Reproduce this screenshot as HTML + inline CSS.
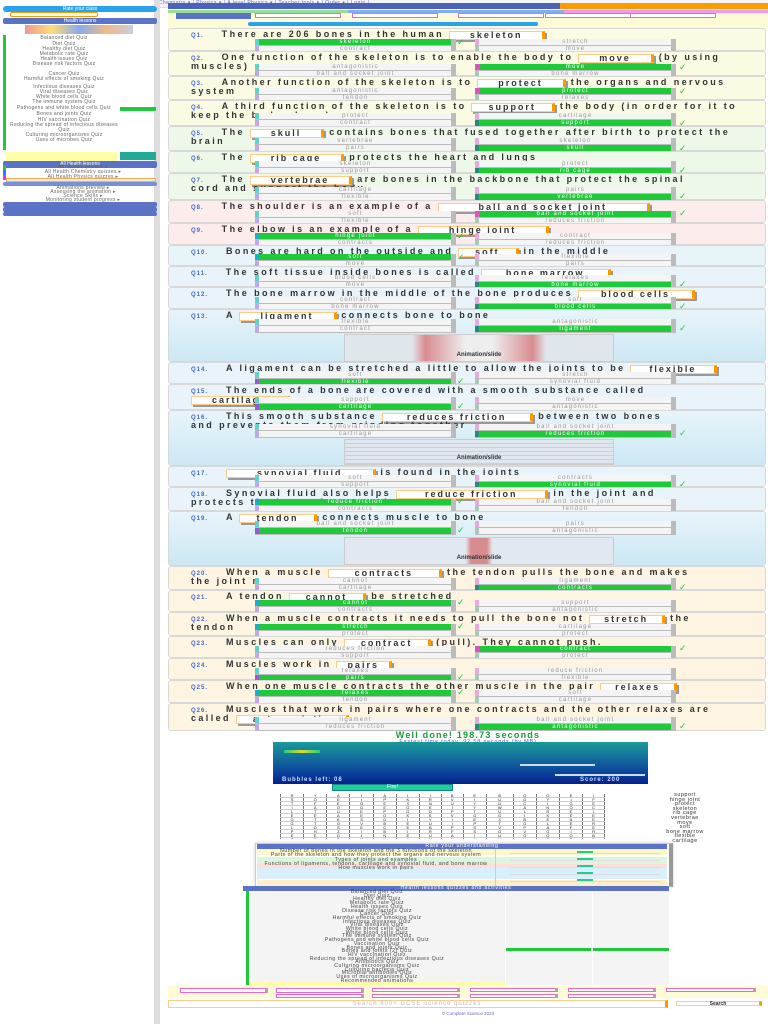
<!DOCTYPE html>
<html><head><meta charset="utf-8"><style>
*{box-sizing:border-box;margin:0;padding:0}
body{width:768px;height:1024px;position:relative;overflow:hidden;background:#fff;font-family:"Liberation Sans",sans-serif;color:#333}
.a{position:absolute}
#side{left:0;top:0;width:160px;height:1024px;background:#fff;border-right:6px solid #ddd}
.sb{position:absolute;left:3px;width:154px;height:6px;background:#5b73c4;border-radius:2px;color:#fff;font-size:5px;text-align:center;line-height:6px}
.sl{position:absolute;left:8px;width:112px;font-size:5px;color:#666;text-align:center;letter-spacing:.3px;line-height:5px}
.q{position:absolute;left:168px;width:598px;border:1px solid #d8d8d8;border-radius:3px}
.qt{position:absolute;left:22px;right:2px;top:2px;font-size:9px;font-weight:bold;letter-spacing:2.4px;line-height:7px;color:#333;white-space:nowrap}
.qt i{font-style:normal;color:#4466cc;font-size:6px;margin-right:18px;letter-spacing:1px}
.ab{display:inline-block;background:#fff;border:1px solid #fc8;border-right:3px solid #f90;box-shadow:2px 2px 0 #999;padding:0 20px;text-align:center;font-weight:bold;line-height:7px;height:9px;vertical-align:top;letter-spacing:2px}
.o{position:absolute;width:196px;height:7px;background:#f4f4f4;border-bottom:1px solid #bbb;font-size:6px;line-height:6px;color:#999;text-align:center;letter-spacing:1.2px;padding-left:5px}
.o:before{content:"";position:absolute;left:0;top:0;width:4px;height:6px;background:var(--c)}
.o:after{content:"";position:absolute;right:-5px;top:0;width:5px;height:7px;background:#bbb}
.L{left:86px}.R{left:306px}
.g{background:#1ec93a;color:#fff}
.tk{position:absolute;font-size:9px;color:#1ec93a;line-height:7px}
.img{position:absolute;left:175px;width:270px;background:#e8eef2;border:1px solid #ccc}
table.ws{border-collapse:collapse;width:325px;height:45px;font-size:4px;line-height:3px;text-align:center}
table.ws td{border:1px solid #777;border-width:0 1px 1px 1px;border-bottom-color:#ccc;padding:0;height:3.4px;color:#222;background:#fff}
</style></head><body>

<div class="a" style="left:0;top:0;width:768px;height:8px;background:#f5f5f5;border-bottom:1px solid #ddd"></div>
<div class="a" style="left:0;top:0;width:48px;height:6px;background:linear-gradient(90deg,#c97,#eb8)"></div>
<div class="a" style="left:50px;top:0;width:340px;height:6px;font-size:5px;color:#56c;letter-spacing:.5px;white-space:nowrap">| Home | Free animations ▾ | Biology ▾ | Chemistry ▾ | Physics ▾ | A level Physics ▾ | Teacher tools ▾ | Order ▾ | Login |</div>

<div id="side" class="a">
<div class="sb" style="top:6px;background:#29a3f0;border-radius:4px">Rate your class</div>
<div class="a" style="left:10px;top:12px;width:88px;height:5px;border:1px solid #f90;border-radius:2px"></div>
<div class="sb" style="top:18px">Health lessons</div>
<div class="a" style="left:25px;top:25px;width:108px;height:9px;background:linear-gradient(90deg,#e99,#fd7,#8ae,#eb8,#ccd)"></div>
<div class="a" style="left:3px;top:35px;width:3px;height:115px;background:#1ec93a"></div>
<div class="sl" style="top:36px">Balanced diet Quiz</div>
<div class="sl" style="top:42px">Diet Quiz</div>
<div class="sl" style="top:47px">Healthy diet Quiz</div>
<div class="sl" style="top:52px">Metabolic rate Quiz</div>
<div class="sl" style="top:57px">Health issues Quiz</div>
<div class="sl" style="top:62px">Disease risk factors Quiz</div>
<div class="sl" style="top:72px">Cancer Quiz</div>
<div class="sl" style="top:77px">Harmful effects of smoking Quiz</div>
<div class="sl" style="top:85px">Infectious diseases Quiz</div>
<div class="sl" style="top:90px">Viral diseases Quiz</div>
<div class="sl" style="top:95px">White blood cells Quiz</div>
<div class="sl" style="top:100px">The immune system Quiz</div>
<div class="sl" style="top:106px">Pathogens and white blood cells Quiz</div>
<div class="a" style="left:120px;top:107px;width:36px;height:4px;background:#1ec93a"></div>
<div class="sl" style="top:112px">Bones and joints Quiz</div>
<div class="sl" style="top:118px">HIV vaccination Quiz</div>
<div class="sl" style="top:123px">Reducing the spread of infectious diseases Quiz</div>
<div class="sl" style="top:133px">Culturing microorganisms Quiz</div>
<div class="sl" style="top:138px">Uses of microbes Quiz</div>
<div class="a" style="left:6px;top:152px;width:112px;height:9px;background:#ffa"></div>
<div class="a" style="left:120px;top:152px;width:36px;height:8px;background:#2a9"></div>
<div class="sb" style="top:161px;height:7px">All Health lessons</div>
<div class="a" style="left:3px;top:165px;width:3px;height:5px;background:#1ec93a"></div>
<div class="a" style="left:3px;top:170px;width:3px;height:5px;background:#37f"></div>
<div class="a" style="left:3px;top:175px;width:3px;height:5px;background:#e3c"></div>
<div class="sl" style="top:165px;width:150px">All Health quizzes ▸</div>
<div class="sl" style="top:170px;width:150px">All Health Chemistry quizzes ▸</div>
<div class="sl" style="top:175px;width:150px">All Health Physics quizzes ▸</div>
<div class="a" style="left:6px;top:178px;width:150px;height:4px;border:1px solid #fa4;background:#eee"></div>
<div class="sb" style="top:182px;height:4px;background:#7b8fd4"></div>
<div class="sl" style="top:186px;width:150px">Animations preview ▸</div>
<div class="sl" style="top:190px;width:150px">Assessing the animation ▸</div>
<div class="sl" style="top:194px;width:150px">Science Skills ▸</div>
<div class="sl" style="top:198px;width:150px">Monitoring student progress ▸</div>
<div class="sb" style="top:202px;height:5px"></div>
<div class="sb" style="top:207px;height:5px"></div>
<div class="sb" style="top:212px;height:4px"></div>
</div>

<div class="a" style="left:168px;top:3px;width:600px;height:6px;background:#4a62b8"></div>
<div class="a" style="left:560px;top:3px;width:208px;height:6px;background:#f90"></div>
<div class="a" style="left:168px;top:9px;width:600px;height:20px;background:#fdfbd6"></div>
<div class="a" style="left:168px;top:10px;width:600px;height:3px;background:linear-gradient(90deg,#9d9 0 30%,#8ae 30% 66%,#e9e 66%)"></div>
<div class="a" style="left:176px;top:13px;width:75px;height:6px;background:#5b73c4"></div>
<div class="a" style="left:255px;top:13px;width:86px;height:5px;background:#fff;border:1px solid #e6c"></div>
<div class="a" style="left:352px;top:13px;width:86px;height:5px;background:#fff;border:1px solid #e6c"></div>
<div class="a" style="left:458px;top:13px;width:86px;height:5px;background:#fff;border:1px solid #e6c"></div>
<div class="a" style="left:545px;top:13px;width:86px;height:5px;background:#fff;border:1px solid #e6c"></div>
<div class="a" style="left:630px;top:13px;width:86px;height:5px;background:#fff;border:1px solid #e6c"></div>
<div class="a" style="left:248px;top:22px;width:290px;height:4px;background:#29a3f0;border-radius:3px"></div>

<div class="q" style="top:28px;height:23px;background:#fbfbe4"><div class="qt"><i>Q1.</i>There are 206 bones in the human <span class="ab">skeleton</span></div>
<div class="o L g" style="top:10px;--c:#5fd3c8">skeleton</div><span class="tk" style="left:288px;top:10px">✓</span><div class="o L" style="top:17px;--c:#c0a8e8">contract</div><div class="o R" style="top:10px;--c:#eaa8e0">stretch</div><div class="o R" style="top:17px;--c:#a8c8b8">move</div></div>

<div class="q" style="top:51px;height:25px;background:#fbfbe4"><div class="qt"><i>Q2.</i>One function of the skeleton is to enable the body to <span class="ab">move</span> (by using<br>muscles)</div>
<div class="o L" style="top:12px;--c:#5fd3c8">antagonistic</div><div class="o L" style="top:19px;--c:#c0a8e8">ball and socket joint</div><div class="o R g" style="top:12px;--c:#e84cc8">move</div><span class="tk" style="left:510px;top:12px">✓</span><div class="o R" style="top:19px;--c:#a8c8b8">bone marrow</div></div>

<div class="q" style="top:76px;height:24px;background:#fbfbe4"><div class="qt"><i>Q3.</i>Another function of the skeleton is to <span class="ab">protect</span> the organs and nervous<br>system</div>
<div class="o L" style="top:11px;--c:#5fd3c8">antagonistic</div><div class="o L" style="top:18px;--c:#c0a8e8">tendon</div><div class="o R g" style="top:11px;--c:#e84cc8">protect</div><span class="tk" style="left:510px;top:11px">✓</span><div class="o R" style="top:18px;--c:#a8c8b8">relaxes</div></div>

<div class="q" style="top:100px;height:26px;background:#fbfbe4"><div class="qt"><i>Q4.</i>A third function of the skeleton is to <span class="ab" style="padding:0 16px">support</span> the body (in order for it to<br>keep the body shape)</div>
<div class="o L" style="top:12px;--c:#5fd3c8">protect</div><div class="o L" style="top:19px;--c:#c0a8e8">contract</div><div class="o R" style="top:12px;--c:#eaa8e0">cartilage</div><div class="o R g" style="top:19px;--c:#2a8a7a">support</div><span class="tk" style="left:510px;top:19px">✓</span></div>

<div class="q" style="top:126px;height:25px;background:#eef8e8"><div class="qt"><i>Q5.</i>The <span class="ab">skull</span> contains bones that fused together after birth to protect the<br>brain</div>
<div class="o L" style="top:11px;--c:#5fd3c8">vertebrae</div><div class="o L" style="top:18px;--c:#c0a8e8">pairs</div><div class="o R" style="top:11px;--c:#eaa8e0">skeleton</div><div class="o R g" style="top:18px;--c:#2a8a7a">skull</div><span class="tk" style="left:510px;top:18px">✓</span></div>

<div class="q" style="top:151px;height:22px;background:#eef8e8"><div class="qt"><i>Q6.</i>The <span class="ab">rib cage</span> protects the heart and lungs</div>
<div class="o L" style="top:9px;--c:#5fd3c8">skeleton</div><div class="o L" style="top:16px;--c:#c0a8e8">support</div><div class="o R" style="top:9px;--c:#eaa8e0">protect</div><div class="o R g" style="top:16px;--c:#2a8a7a">rib cage</div><span class="tk" style="left:510px;top:15px">✓</span></div>

<div class="q" style="top:173px;height:27px;background:#eef8e8"><div class="qt"><i>Q7.</i>The <span class="ab">vertebrae</span> are bones in the backbone that protect the spinal<br>cord and support the body</div>
<div class="o L" style="top:13px;--c:#5fd3c8">cartilage</div><div class="o L" style="top:20px;--c:#c0a8e8">flexible</div><div class="o R" style="top:13px;--c:#eaa8e0">pairs</div><div class="o R g" style="top:20px;--c:#2a8a7a">vertebrae</div><span class="tk" style="left:510px;top:19px">✓</span></div>

<div class="q" style="top:200px;height:23px;background:#fcecec"><div class="qt"><i>Q8.</i>The shoulder is an example of a <span class="ab" style="padding:0 40px">ball and socket joint</span></div>
<div class="o L" style="top:10px;--c:#5fd3c8">soft</div><div class="o L" style="top:17px;--c:#c0a8e8">flexible</div><div class="o R g" style="top:10px;--c:#e84cc8">ball and socket joint</div><span class="tk" style="left:510px;top:9px">✓</span><div class="o R" style="top:17px;--c:#a8c8b8">reduces friction</div></div>

<div class="q" style="top:223px;height:22px;background:#fcecec"><div class="qt"><i>Q9.</i>The elbow is an example of a <span class="ab" style="padding:0 30px">hinge joint</span></div>
<div class="o L g" style="top:9px;--c:#1bb0c0">hinge joint</div><span class="tk" style="left:288px;top:9px">✓</span><div class="o L" style="top:16px;--c:#c0a8e8">contracts</div><div class="o R" style="top:9px;--c:#eaa8e0">contract</div><div class="o R" style="top:16px;--c:#a8c8b8">reduces friction</div></div>

<div class="q" style="top:245px;height:21px;background:#e8f4fa"><div class="qt"><i>Q10.</i>Bones are hard on the outside and <span class="ab" style="padding:0 16px">soft</span> in the middle</div>
<div class="o L g" style="top:8px;--c:#1bb0c0">soft</div><span class="tk" style="left:288px;top:8px">✓</span><div class="o L" style="top:15px;--c:#c0a8e8">move</div><div class="o R" style="top:8px;--c:#eaa8e0">flexible</div><div class="o R" style="top:15px;--c:#a8c8b8">pairs</div></div>

<div class="q" style="top:266px;height:21px;background:#e8f4fa"><div class="qt"><i>Q11.</i>The soft tissue inside bones is called <span class="ab" style="padding:0 24px">bone marrow</span></div>
<div class="o L" style="top:8px;--c:#5fd3c8">blood cells</div><div class="o L" style="top:15px;--c:#c0a8e8">move</div><div class="o R" style="top:8px;--c:#eaa8e0">relaxes</div><div class="o R g" style="top:15px;--c:#2a8a7a">bone marrow</div><span class="tk" style="left:510px;top:14px">✓</span></div>

<div class="q" style="top:287px;height:22px;background:#e8f4fa"><div class="qt"><i>Q12.</i>The bone marrow in the middle of the bone produces <span class="ab" style="padding:0 22px">blood cells</span></div>
<div class="o L" style="top:9px;--c:#5fd3c8">contract</div><div class="o L" style="top:16px;--c:#c0a8e8">bone marrow</div><div class="o R" style="top:9px;--c:#eaa8e0">soft</div><div class="o R g" style="top:16px;--c:#2a8a7a">blood cells</div><span class="tk" style="left:510px;top:15px">✓</span></div>

<div class="q" style="top:309px;height:53px;background:linear-gradient(#e8f4fa,#cce8f4)"><div class="qt"><i>Q13.</i>A <span class="ab" style="padding:0 20px">ligament</span> connects bone to bone</div>
<div class="o L" style="top:9px;--c:#5fd3c8">flexible</div><div class="o L" style="top:16px;--c:#c0a8e8">contract</div><div class="o R" style="top:9px;--c:#eaa8e0">antagonistic</div><div class="o R g" style="top:16px;--c:#2a8a7a">ligament</div><span class="tk" style="left:510px;top:15px">✓</span>
<div class="img" style="top:24px;height:28px;background:linear-gradient(90deg,#dfe6ec 25%,#d98c90 30%,#eee 45%,#eee 55%,#d98c90 70%,#dfe6ec 75%)"><div style="position:absolute;left:0;right:0;bottom:3px;text-align:center;font-size:6px;font-weight:bold;color:#333">Animation/slide</div></div></div>

<div class="q" style="top:362px;height:22px;background:#e8f4fa"><div class="qt"><i>Q14.</i>A ligament can be stretched a little to allow the joints to be <span class="ab" style="padding:0 18px">flexible</span></div>
<div class="o L" style="top:9px;--c:#5fd3c8">soft</div><div class="o L g" style="top:16px;--c:#9a5ad8">flexible</div><span class="tk" style="left:288px;top:15px">✓</span><div class="o R" style="top:9px;--c:#eaa8e0">stretch</div><div class="o R" style="top:16px;--c:#a8c8b8">synovial fluid</div></div>

<div class="q" style="top:384px;height:26px;background:#e8f4fa"><div class="qt"><i>Q15.</i>The ends of a bone are covered with a smooth substance called<br><span class="ab" style="padding:0 20px">cartilage</span></div>
<div class="o L" style="top:12px;--c:#5fd3c8">support</div><div class="o L g" style="top:19px;--c:#9a5ad8">cartilage</div><span class="tk" style="left:288px;top:18px">✓</span><div class="o R" style="top:12px;--c:#eaa8e0">move</div><div class="o R" style="top:19px;--c:#a8c8b8">antagonistic</div></div>

<div class="q" style="top:410px;height:56px;background:linear-gradient(#e8f4fa,#cce8f4)"><div class="qt"><i>Q16.</i>This smooth substance <span class="ab" style="padding:0 24px">reduces friction</span> between two bones<br>and prevents them from grinding together</div>
<div class="o L" style="top:13px;--c:#5fd3c8">synovial fluid</div><div class="o L" style="top:20px;--c:#c0a8e8">cartilage</div><div class="o R" style="top:13px;--c:#eaa8e0">ball and socket joint</div><div class="o R g" style="top:20px;--c:#2a8a7a">reduces friction</div><span class="tk" style="left:510px;top:19px">✓</span>
<div class="img" style="top:28px;height:26px;background:repeating-linear-gradient(#dfe6ee 0 3px,#c8d0e8 3px 4px)"><div style="position:absolute;left:0;right:0;bottom:3px;text-align:center;font-size:6px;font-weight:bold;color:#333">Animation/slide</div></div></div>

<div class="q" style="top:466px;height:21px;background:#e8f4fa"><div class="qt"><i>Q17.</i><span class="ab" style="padding:0 30px">synovial fluid</span> is found in the joints</div>
<div class="o L" style="top:8px;--c:#5fd3c8">soft</div><div class="o L" style="top:15px;--c:#c0a8e8">support</div><div class="o R" style="top:8px;--c:#eaa8e0">contracts</div><div class="o R g" style="top:15px;--c:#2a8a7a">synovial fluid</div><span class="tk" style="left:510px;top:14px">✓</span></div>

<div class="q" style="top:487px;height:24px;background:#e8f4fa"><div class="qt"><i>Q18.</i>Synovial fluid also helps <span class="ab" style="padding:0 28px">reduce friction</span> in the joint and<br>protects the bones from wearing away</div>
<div class="o L g" style="top:11px;--c:#1bb0c0">reduce friction</div><span class="tk" style="left:288px;top:10px">✓</span><div class="o L" style="top:18px;--c:#c0a8e8">contracts</div><div class="o R" style="top:11px;--c:#eaa8e0">ball and socket joint</div><div class="o R" style="top:18px;--c:#a8c8b8">tendon</div></div>

<div class="q" style="top:511px;height:55px;background:linear-gradient(#e8f4fa,#cce8f4)"><div class="qt"><i>Q19.</i>A <span class="ab" style="padding:0 16px">tendon</span> connects muscle to bone</div>
<div class="o L" style="top:9px;--c:#5fd3c8">ball and socket joint</div><div class="o L g" style="top:16px;--c:#9a5ad8">tendon</div><span class="tk" style="left:288px;top:15px">✓</span><div class="o R" style="top:9px;--c:#eaa8e0">pairs</div><div class="o R" style="top:16px;--c:#a8c8b8">antagonistic</div>
<div class="img" style="top:25px;height:28px;background:linear-gradient(90deg,#e2e8f0 45%,#d98c90 47%,#d98c90 53%,#e2e8f0 55%)"><div style="position:absolute;left:0;right:0;bottom:3px;text-align:center;font-size:6px;font-weight:bold;color:#333">Animation/slide</div></div></div>

<div class="q" style="top:566px;height:24px;background:#fdf4e2"><div class="qt"><i>Q20.</i>When a muscle <span class="ab" style="padding:0 26px">contracts</span> the tendon pulls the bone and makes<br>the joint move</div>
<div class="o L" style="top:11px;--c:#5fd3c8">cannot</div><div class="o L" style="top:18px;--c:#c0a8e8">cartilage</div><div class="o R" style="top:11px;--c:#eaa8e0">ligament</div><div class="o R g" style="top:18px;--c:#2a8a7a">contracts</div><span class="tk" style="left:510px;top:17px">✓</span></div>

<div class="q" style="top:590px;height:22px;background:#fdf4e2"><div class="qt"><i>Q21.</i>A tendon <span class="ab" style="padding:0 16px">cannot</span> be stretched</div>
<div class="o L g" style="top:9px;--c:#1bb0c0">cannot</div><span class="tk" style="left:288px;top:8px">✓</span><div class="o L" style="top:16px;--c:#c0a8e8">contracts</div><div class="o R" style="top:9px;--c:#eaa8e0">support</div><div class="o R" style="top:16px;--c:#a8c8b8">antagonistic</div></div>

<div class="q" style="top:612px;height:24px;background:#fdf4e2"><div class="qt"><i>Q22.</i>When a muscle contracts it needs to pull the bone not <span class="ab" style="padding:0 14px">stretch</span> the<br>tendon</div>
<div class="o L g" style="top:11px;--c:#1bb0c0">stretch</div><span class="tk" style="left:288px;top:10px">✓</span><div class="o L" style="top:18px;--c:#c0a8e8">protect</div><div class="o R" style="top:11px;--c:#eaa8e0">cartilage</div><div class="o R" style="top:18px;--c:#a8c8b8">protect</div></div>

<div class="q" style="top:636px;height:22px;background:#fdf4e2"><div class="qt"><i>Q23.</i>Muscles can only <span class="ab" style="padding:0 16px">contract</span> (pull). They cannot push.</div>
<div class="o L" style="top:9px;--c:#5fd3c8">reduces friction</div><div class="o L" style="top:16px;--c:#c0a8e8">support</div><div class="o R g" style="top:9px;--c:#e84cc8">contract</div><span class="tk" style="left:510px;top:8px">✓</span><div class="o R" style="top:16px;--c:#a8c8b8">protect</div></div>

<div class="q" style="top:658px;height:22px;background:#fdf4e2"><div class="qt"><i>Q24.</i>Muscles work in <span class="ab" style="padding:0 10px">pairs</span></div>
<div class="o L" style="top:9px;--c:#5fd3c8">relaxes</div><div class="o L g" style="top:16px;--c:#9a5ad8">pairs</div><span class="tk" style="left:288px;top:15px">✓</span><div class="o R" style="top:9px;--c:#eaa8e0">reduce friction</div><div class="o R" style="top:16px;--c:#a8c8b8">flexible</div></div>

<div class="q" style="top:680px;height:23px;background:#fdf4e2"><div class="qt"><i>Q25.</i>When one muscle contracts the other muscle in the pair <span class="ab" style="padding:0 14px">relaxes</span></div>
<div class="o L g" style="top:9px;--c:#1bb0c0">relaxes</div><span class="tk" style="left:288px;top:8px">✓</span><div class="o L" style="top:16px;--c:#c0a8e8">tendon</div><div class="o R" style="top:9px;--c:#eaa8e0">soft</div><div class="o R" style="top:16px;--c:#a8c8b8">cartilage</div></div>

<div class="q" style="top:703px;height:28px;background:#fdf4e2"><div class="qt"><i>Q26.</i>Muscles that work in pairs where one contracts and the other relaxes are<br>called <span class="ab" style="padding:0 16px">antagonistic</span></div>
<div class="o L" style="top:13px;--c:#5fd3c8">ligament</div><div class="o L" style="top:20px;--c:#c0a8e8">reduces friction</div><div class="o R" style="top:13px;--c:#eaa8e0">ball and socket joint</div><div class="o R g" style="top:20px;--c:#2a8a7a">antagonistic</div><span class="tk" style="left:510px;top:19px">✓</span></div>

<div class="a" style="left:168px;top:731px;width:600px;text-align:center;font-size:9px;font-weight:bold;color:#1a9a3a;letter-spacing:1.2px;line-height:8px">Well done! 198.73 seconds</div>
<div class="a" style="left:168px;top:739px;width:600px;text-align:center;font-size:5.5px;color:#55c;letter-spacing:.8px">Fastest time today: 92.58 seconds (by MB)</div>

<div class="a" style="left:273px;top:742px;width:375px;height:42px;background:linear-gradient(#1a9a9a,#0a3a9a 80%,#04208a)"></div>
<div class="a" style="left:284px;top:750px;width:36px;height:3px;background:linear-gradient(90deg,#2c8,#dd2,#2c8)"></div>
<div class="a" style="left:520px;top:764px;width:75px;height:2px;background:#cde"></div>
<div class="a" style="left:555px;top:774px;width:90px;height:2px;background:#cde"></div>
<div class="a" style="left:282px;top:777px;font-size:6px;font-weight:bold;color:#cdf;letter-spacing:1px">Bubbles left: 08</div>
<div class="a" style="left:580px;top:777px;font-size:6px;font-weight:bold;color:#cdf;letter-spacing:1px">Score: 200</div>
<div class="a" style="left:332px;top:784px;width:121px;height:7px;background:#2c9;border:1px solid #188;font-size:5.5px;color:#fff;text-align:center;line-height:5px">Fire!</div>

<div class="a" style="left:280px;top:794px;width:325px;height:45px;overflow:hidden">
<table class="ws">
<tr><td>R</td><td>Y</td><td>A</td><td>I</td><td>A</td><td>I</td><td>I</td><td>B</td><td>E</td><td>B</td><td>G</td><td>O</td><td>E</td><td>I</td></tr>
<tr><td>S</td><td>O</td><td>E</td><td>I</td><td>P</td><td>K</td><td>R</td><td>V</td><td>I</td><td>U</td><td>G</td><td>Y</td><td>I</td><td>F</td></tr>
<tr><td>T</td><td>F</td><td>E</td><td>O</td><td>E</td><td>X</td><td>N</td><td>U</td><td>Y</td><td>D</td><td>C</td><td>I</td><td>G</td><td>E</td></tr>
<tr><td>I</td><td>A</td><td>O</td><td>G</td><td>E</td><td>O</td><td>E</td><td>I</td><td>Y</td><td>W</td><td>A</td><td>N</td><td>O</td><td>C</td></tr>
<tr><td>L</td><td>T</td><td>U</td><td>E</td><td>P</td><td>G</td><td>D</td><td>P</td><td>T</td><td>U</td><td>L</td><td>R</td><td>E</td><td>I</td></tr>
<tr><td>E</td><td>E</td><td>A</td><td>E</td><td>O</td><td>K</td><td>E</td><td>V</td><td>G</td><td>G</td><td>I</td><td>K</td><td>E</td><td>E</td></tr>
<tr><td>G</td><td>T</td><td>K</td><td>S</td><td>G</td><td>I</td><td>Y</td><td>I</td><td>E</td><td>X</td><td>B</td><td>E</td><td>A</td><td>E</td></tr>
<tr><td>G</td><td>T</td><td>O</td><td>V</td><td>B</td><td>E</td><td>U</td><td>I</td><td>P</td><td>T</td><td>G</td><td>L</td><td>E</td><td>R</td></tr>
<tr><td>L</td><td>O</td><td>S</td><td>E</td><td>C</td><td>E</td><td>B</td><td>P</td><td>S</td><td>V</td><td>P</td><td>A</td><td>F</td><td>E</td></tr>
<tr><td>P</td><td>H</td><td>Z</td><td>I</td><td>B</td><td>I</td><td>R</td><td>F</td><td>S</td><td>O</td><td>V</td><td>G</td><td>I</td><td>R</td></tr>
<tr><td>E</td><td>E</td><td>G</td><td>I</td><td>N</td><td>E</td><td>U</td><td>A</td><td>I</td><td>U</td><td>O</td><td>O</td><td>O</td><td>B</td></tr>
<tr><td>T</td><td>F</td><td>D</td><td>G</td><td>K</td><td>A</td><td>N</td><td>H</td><td>L</td><td>V</td><td>U</td><td>O</td><td>T</td><td>E</td></tr>
<tr><td>D</td><td>I</td><td>C</td><td>Z</td><td>X</td><td>I</td><td>D</td><td>V</td><td>O</td><td>G</td><td>L</td><td>I</td><td>T</td><td>U</td></tr>
</table></div>
<div class="a" style="left:640px;top:793px;width:90px;text-align:center;font-size:5.5px;line-height:4.6px;color:#333;letter-spacing:.5px">support<br>hinge joint<br>protect<br>skeleton<br>rib cage<br>vertebrae<br>move<br>soft<br>bone marrow<br>flexible<br>cartilage</div>

<div class="a" style="left:255px;top:843px;width:418px;height:44px;border:1px solid #ccc;border-right:4px solid #999;box-shadow:0 0 3px #ccc"></div>
<div class="a" style="left:257px;top:844px;width:410px;height:5px;background:#5b73c4;color:#fff;font-size:5px;text-align:center;line-height:5px;letter-spacing:.8px">Rate your understanding</div>
<div class="a" style="left:257px;top:849px;width:410px;height:37px;background:linear-gradient(#fbf7c8 0 6px,#fff 6px 8px,#dcf5dc 8px 15px,#fdd 15px 19px,#d8f0fb 19px 30px,#fff 30px 31px,#fdf0c8 31px)"></div>
<div class="a" style="left:495px;top:849px;width:1px;height:37px;background:#ccc"></div>
<div class="a" style="left:257px;top:849px;width:238px;font-size:5.3px;line-height:4.3px;text-align:center;color:#444;letter-spacing:.5px">Number of bones in the skeleton and the 3 functions of the skeleton<br>Parts of the skeleton and how they protect the organs and nervous system<br>Types of joints and examples<br>Functions of ligaments, tendons, cartilage and synovial fluid, and bone marrow<br>How muscles work in pairs</div>
<div class="a" style="left:510px;top:850px;width:150px;height:35px;background:repeating-linear-gradient(transparent 0 3px,#ddd 3px 4px,transparent 4px 7px)"></div>
<div class="a" style="left:577px;top:851px;width:16px;height:2px;background:#2c9;box-shadow:0 7px #2c9,0 14px #2c9,0 21px #2c9,0 28px #2c9"></div>

<div class="a" style="left:243px;top:886px;width:426px;height:5px;background:#5b73c4;color:#fff;font-size:5px;text-align:center;line-height:5px;letter-spacing:.8px">Health lessons quizzes and activities</div>
<div class="a" style="left:246px;top:891px;width:3px;height:94px;background:#1ec93a"></div>
<div class="a" style="left:249px;top:891px;width:420px;height:94px;background:#f4f4f4"></div>
<div class="a" style="left:505px;top:891px;width:1px;height:94px;background:#fff"></div>
<div class="a" style="left:592px;top:891px;width:1px;height:94px;background:#fff"></div>
<div class="a" style="left:506px;top:948px;width:85px;height:3px;background:#1ec93a"></div>
<div class="a" style="left:593px;top:948px;width:76px;height:3px;background:#1ec93a"></div>
<div class="a" style="left:249px;top:981px;width:256px;height:4px;background:#ffa"></div>
<div class="a" style="left:249px;top:891px;width:256px;font-size:5.2px;line-height:3.7px;text-align:center;color:#444;letter-spacing:.5px">Balanced diet Quiz<br>Diet Quiz<br>Healthy diet Quiz<br>Metabolic rate Quiz<br>Health issues Quiz<br>Disease risk factors Quiz<br>Cancer Quiz<br>Harmful effects of smoking Quiz<br>Infectious diseases Quiz<br>Viral diseases Quiz<br>White blood cells Quiz<br>White blood cells Quiz<br>The immune system Quiz<br>Pathogens and white blood cells Quiz<br>Vaccination Quiz<br>Bones and joints Quiz<br>Bones and joints (2) Quiz<br>HIV vaccination Quiz<br>Reducing the spread of infectious diseases Quiz<br>Antibiotics Quiz<br>Culturing microorganisms Quiz<br>Culturing bacteria Quiz<br>Microbial antibodies Quiz<br>Uses of microorganisms Quiz<br>Recommended animations</div>

<div class="a" style="left:168px;top:986px;width:600px;height:12px;background:#fdfbd6"></div>
<div class="a" style="left:180px;top:988px;width:88px;height:5px;background:#fff;border:1px solid #e6c;border-right:3px solid #aaa"></div>
<div class="a" style="left:276px;top:988px;width:88px;height:5px;background:#fff;border:1px solid #e6c;border-right:3px solid #aaa"></div>
<div class="a" style="left:372px;top:988px;width:88px;height:4px;background:#fff;border:1px solid #e6c;border-right:3px solid #aaa"></div>
<div class="a" style="left:470px;top:988px;width:88px;height:4px;background:#fff;border:1px solid #e6c;border-right:3px solid #aaa"></div>
<div class="a" style="left:568px;top:988px;width:88px;height:4px;background:#fff;border:1px solid #e6c;border-right:3px solid #aaa"></div>
<div class="a" style="left:666px;top:988px;width:90px;height:4px;background:#fff;border:1px solid #e6c;border-right:3px solid #aaa"></div>
<div class="a" style="left:276px;top:994px;width:88px;height:4px;background:#fff;border:1px solid #e6c;border-right:3px solid #aaa"></div>
<div class="a" style="left:372px;top:994px;width:88px;height:4px;background:#fff;border:1px solid #e6c;border-right:3px solid #aaa"></div>
<div class="a" style="left:470px;top:994px;width:88px;height:4px;background:#fff;border:1px solid #e6c;border-right:3px solid #aaa"></div>
<div class="a" style="left:568px;top:994px;width:88px;height:4px;background:#fff;border:1px solid #e6c;border-right:3px solid #aaa"></div>
<div class="a" style="left:168px;top:1000px;width:500px;height:8px;background:#fff;border:1px solid #fc8;border-right:3px solid #f90;font-size:6px;color:#bbb;text-align:center;line-height:6px;letter-spacing:1px">Search 800+ GCSE science quizzes</div>
<div class="a" style="left:676px;top:1001px;width:86px;height:5px;background:#fff;border:1px solid #fc8;border-right:3px solid #f90;font-size:5px;font-weight:bold;text-align:center;line-height:4px">Search</div>
<div class="a" style="left:168px;top:1011px;width:600px;text-align:center;font-size:4.5px;color:#66c">© Complete Science 2023</div>
</body></html>
